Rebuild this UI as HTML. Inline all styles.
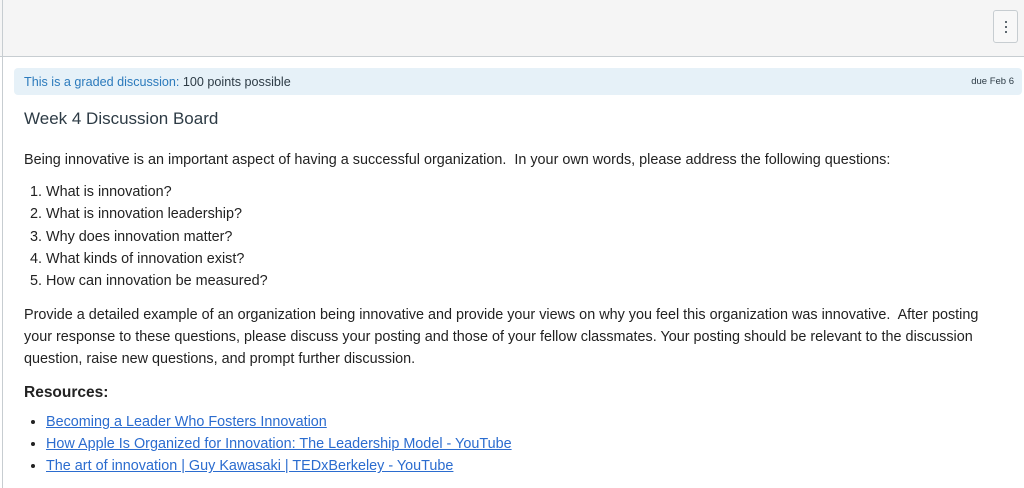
<!DOCTYPE html>
<html><head><style>
body{margin:0;width:1024px;height:488px;overflow:hidden;background:#fff;font-family:"Liberation Sans",sans-serif;color:#2d3b45;position:relative}
.hdr{position:absolute;left:0;top:0;width:1024px;height:56px;background:#f5f5f5;border-bottom:1px solid #c7cdd1}
.lb{position:absolute;left:2px;top:0;width:1px;height:488px;background:#c7cdd1}
.btn{position:absolute;left:993px;top:10px;width:25px;height:33px;border:1px solid #c7cdd1;border-radius:3px;background:#f8f8f8;box-sizing:border-box}
.btn i{position:absolute;left:11px;width:2px;height:2px;background:#2d3b45;border-radius:1px}
.ban{position:absolute;left:14px;top:68px;width:1008px;height:27px;background:#e6f1f8;border-radius:4px;font-size:12.6px}
.ban .l{position:absolute;left:10px;top:7px}
.ban .r{position:absolute;right:8px;top:8px;font-size:9.5px}
.blue{color:#2b7abc}
h1{position:absolute;left:24px;top:109px;margin:0;font-weight:normal;font-size:17px;color:#2d3b45}
.c{position:absolute;left:24px;top:149px;width:960px;font-size:14.4px;line-height:22px;color:#222}
p{margin:0}
ol{margin:10px 0 12px;padding-left:22px}
ol li{line-height:22.3px}
h3{margin:12px 0 7px;font-size:15.5px;font-weight:bold}
ul{margin:0;padding-left:22px}
a{color:#2b6ccf;text-decoration:underline}
</style></head><body>
<div class="hdr"></div><div class="lb"></div>
<div class="btn"><i style="top:10px"></i><i style="top:15px"></i><i style="top:20px"></i></div>
<div class="ban"><span class="l"><span class="blue">This is a graded discussion:</span> 100 points possible</span><span class="r">due Feb 6</span></div>
<h1>Week 4 Discussion Board</h1>
<div class="c">
<p>Being innovative is an important aspect of having a successful organization.&nbsp; In your own words, please address the following questions:</p>
<ol><li>What is innovation?</li><li>What is innovation leadership?</li><li>Why does innovation matter?</li><li>What kinds of innovation exist?</li><li>How can innovation be measured?</li></ol>
<p>Provide a detailed example of an organization being innovative and provide your views on why you feel this organization was innovative.&nbsp; After posting your response to these questions, please discuss your posting and those of your fellow classmates. Your posting should be relevant to the discussion question, raise new questions, and prompt further discussion.</p>
<h3>Resources:</h3>
<ul><li><a>Becoming a Leader Who Fosters Innovation</a></li><li><a>How Apple Is Organized for Innovation: The Leadership Model - YouTube</a></li><li><a>The art of innovation | Guy Kawasaki | TEDxBerkeley - YouTube</a></li></ul>
</div>
</body></html>
